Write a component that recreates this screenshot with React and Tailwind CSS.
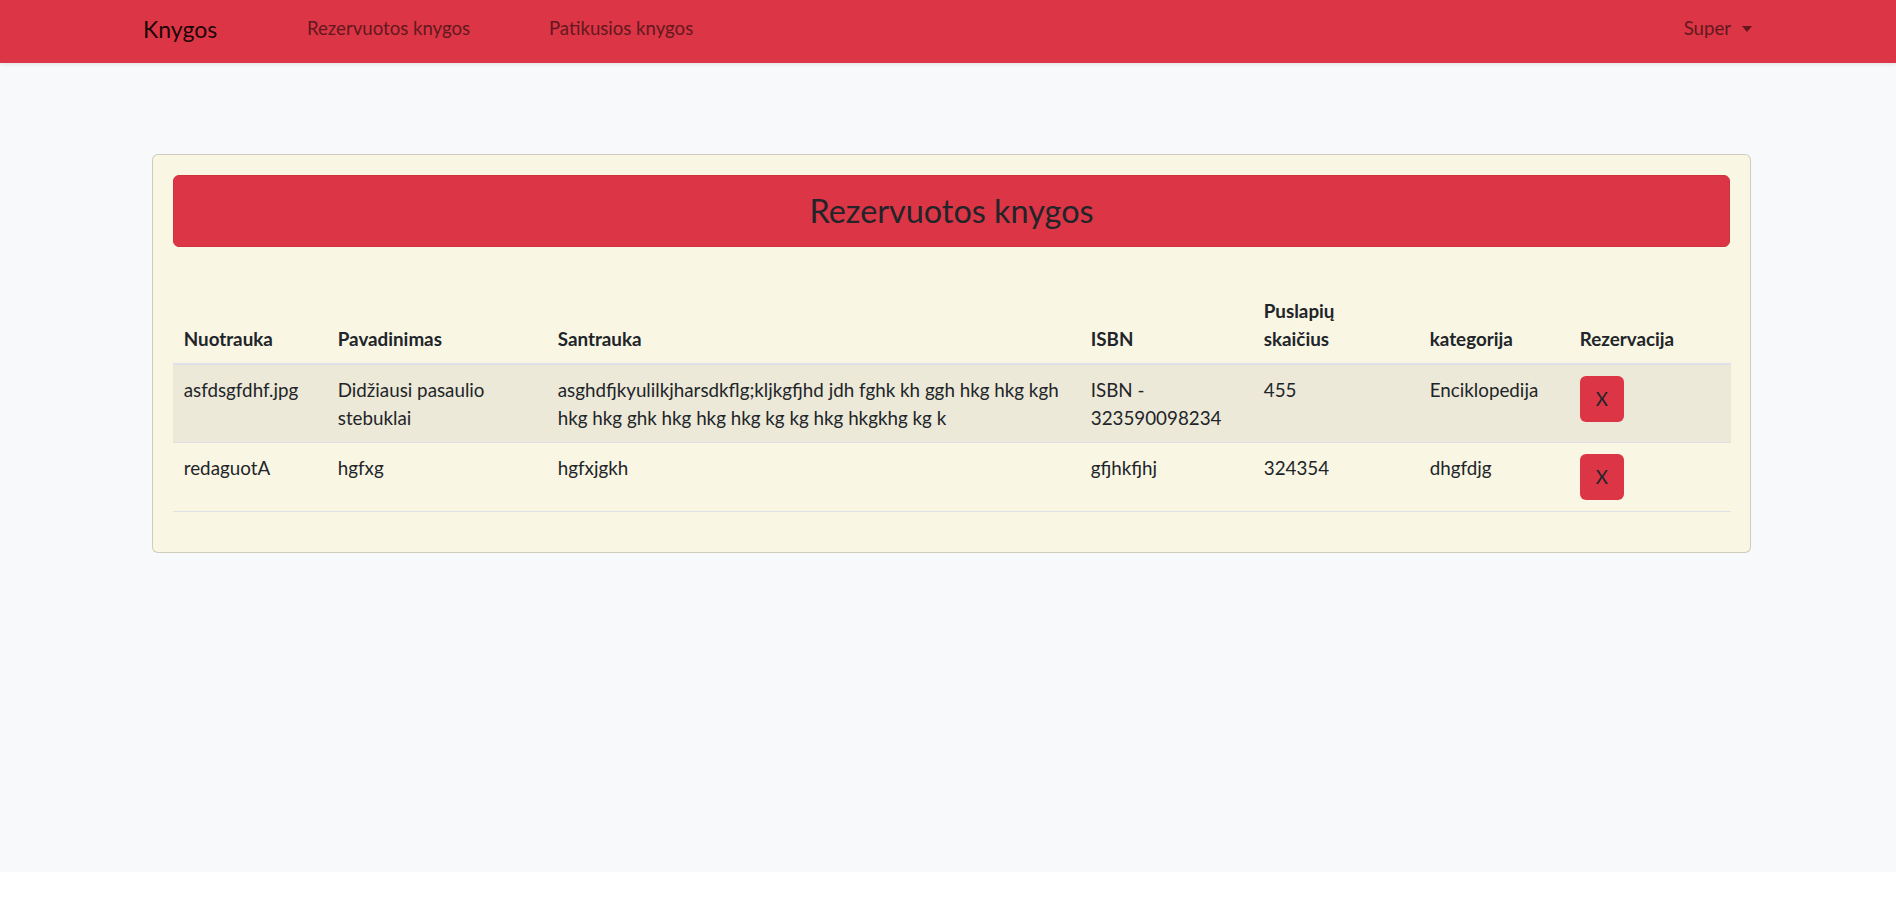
import React from 'react';

// Rezervuotų knygų sąrašas
const books = [
  {
    photo: 'asfdsgfdhf.jpg',
    title: 'Didžiausi pasaulio stebuklai',
    summary: 'asghdfjkyulilkjharsdkflg;kljkgfjhd jdh fghk kh ggh hkg hkg kgh hkg hkg ghk hkg hkg hkg kg kg hkg hkgkhg kg k',
    isbn: 'ISBN - 323590098234',
    pages: '455',
    category: 'Enciklopedija',
  },
  {
    photo: 'redaguotA',
    title: 'hgfxg',
    summary: 'hgfxjgkh',
    isbn: 'gfjhkfjhj',
    pages: '324354',
    category: 'dhgfdjg',
  },
];

const font = { fontFamily: 'Lato, "Open Sans", sans-serif' };

const Navbar = () => (
  <nav className="h-[63px] bg-[#dc3545] shadow-[0_2px_4px_rgba(0,0,0,0.08)] flex items-center pl-[143px] pr-[144px] pb-[5px] relative z-10">
    <a className="w-[164px] text-[23px] text-[rgba(0,0,0,0.9)]">Knygos</a>
    <a className="w-[242px] text-[18.6px] text-[#63181f]">Rezervuotos knygos</a>
    <a className="text-[18.6px] text-[#63181f]">Patikusios knygos</a>
    <button className="ml-auto flex items-center text-[18.6px] text-[#63181f]">
      Super
      <span className="ml-[11px] mt-[1px] w-0 h-0 border-x-[5.5px] border-x-transparent border-t-[6px] border-t-[#63181f]" />
    </button>
  </nav>
);

const cell = 'px-[10.75px] py-[11px]';

const App = () => {
  return (
    <div style={font} className="text-[#212529]">
      <div className="h-[872px] bg-[#f8f9fa]">
        <Navbar />
        <div className="ml-[152px] mt-[91px] w-[1599px] bg-[#f9f6e4] border border-[rgba(0,0,0,0.17)] rounded-[6px] p-[20px]">
          <div className="h-[72px] bg-[#dc3545] border border-[#d0313f] rounded-[6px] flex items-center justify-center">
            <h3 className="text-[32.4px] leading-none">Rezervuotos knygos</h3>
          </div>

          <table className="table-fixed w-full mt-[39px] mb-[20px] text-[18.8px] leading-[27.5px] border-collapse">
            <colgroup>
              <col className="w-[154px]" />
              <col className="w-[220px]" />
              <col className="w-[533px]" />
              <col className="w-[173px]" />
              <col className="w-[166px]" />
              <col className="w-[150px]" />
              <col className="w-[162px]" />
            </colgroup>
            <thead>
              <tr className="border-b-2 border-[#dee2e6] text-left">
                <th className={`${cell} align-bottom font-bold`}>Nuotrauka</th>
                <th className={`${cell} align-bottom font-bold`}>Pavadinimas</th>
                <th className={`${cell} align-bottom font-bold`}>Santrauka</th>
                <th className={`${cell} align-bottom font-bold`}>ISBN</th>
                <th className={`${cell} align-bottom font-bold`}>Puslapių<br />skaičius</th>
                <th className={`${cell} align-bottom font-bold`}>kategorija</th>
                <th className={`${cell} align-bottom font-bold`}>Rezervacija</th>
              </tr>
            </thead>
            <tbody>
              {books.map((b, i) => (
                <tr key={i} className={`border-b border-[#dee2e6] ${i % 2 === 0 ? 'bg-[#ede9d8]' : ''}`}>
                  <td className={`${cell} align-top`}>{b.photo}</td>
                  <td className={`${cell} align-top`}>{b.title}</td>
                  <td className={`${cell} align-top`}>{b.summary}</td>
                  <td className={`${cell} align-top`}>{b.isbn}</td>
                  <td className={`${cell} align-top`}>{b.pages}</td>
                  <td className={`${cell} align-top`}>{b.category}</td>
                  <td className={`${cell} align-top`}>
                    <button className="w-[44px] h-[46px] bg-[#dc3545] rounded-[6px] text-[18.8px] text-[#212529] flex items-center justify-center">
                      X
                    </button>
                  </td>
                </tr>
              ))}
            </tbody>
          </table>
        </div>
      </div>
    </div>
  );
};

export default App;
